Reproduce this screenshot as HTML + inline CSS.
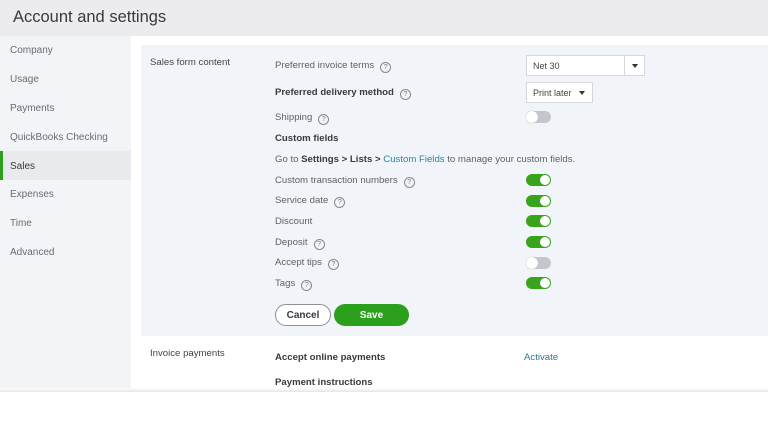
<!DOCTYPE html>
<html><head><style>
*{margin:0;padding:0;box-sizing:border-box}
body{width:768px;height:432px;background:#fff;font-family:"Liberation Sans",sans-serif;position:relative;overflow:hidden;color:#555}
.a{position:absolute;white-space:nowrap}
.hdr{left:0;top:0;width:768px;height:36px;background:#ececee}
.side{left:0;top:36px;width:131px;height:355px;background:#f3f4f7}
.nav{font-size:10px;color:#6b6c72;left:10px}
.panel{left:141px;top:45px;width:627px;height:291px;background:#f1f5fa}
.t{font-size:9.6px;color:#5f6066}
.b{font-weight:bold;color:#393a3d}
.q{display:inline-block;width:11px;height:11px;border:1px solid #888;border-radius:50%;font-size:7px;text-align:center;line-height:9px;margin-left:6px;vertical-align:-1px;color:#777;font-weight:normal}
.tg{width:25px;height:12px;border-radius:6px;left:526px}
.on{background:#3aa31d}
.on:after{content:"";position:absolute;right:1px;top:1px;width:10px;height:10px;border-radius:50%;background:#fff}
.off{background:#c4c6cb}
.off:after{content:"";position:absolute;left:0;top:0;width:12px;height:12px;border-radius:50%;background:#fff;box-shadow:0 0 1px #999}
.sel{background:#fff;border:1px solid #d5d7db;font-size:9px;color:#444;padding:5px 6px}
.tri{width:0;height:0;border-left:3px solid transparent;border-right:3px solid transparent;border-top:4px solid #333}
.btn{display:flex;align-items:center;justify-content:center;font-size:10px;font-weight:bold;border-radius:11px}
</style></head><body>
<div class="a hdr"></div>
<div class="a" style="left:13px;top:8px;font-size:16.5px;color:#393a3d">Account and settings</div>
<div class="a side"></div>
<div class="a" style="left:0;top:151px;width:131px;height:29px;background:#e9eaee"></div>
<div class="a" style="left:0;top:151px;width:3px;height:29px;background:#2ca01c"></div>
<div class="a nav" style="top:45px">Company</div>
<div class="a nav" style="top:74px">Usage</div>
<div class="a nav" style="top:103px">Payments</div>
<div class="a nav" style="top:132px">QuickBooks Checking</div>
<div class="a nav" style="top:161px;color:#393a3d">Sales</div>
<div class="a nav" style="top:189px">Expenses</div>
<div class="a nav" style="top:218px">Time</div>
<div class="a nav" style="top:247px">Advanced</div>
<div class="a panel"></div>
<div class="a t" style="left:150px;top:57px;color:#444">Sales form content</div>
<div class="a t" style="left:275px;top:60px">Preferred invoice terms<span class="q">?</span></div>
<div class="a t b" style="left:275px;top:87px">Preferred delivery method<span class="q">?</span></div>
<div class="a t" style="left:275px;top:112px">Shipping<span class="q">?</span></div>
<div class="a t b" style="left:275px;top:133px">Custom fields</div>
<div class="a t" style="left:275px;top:154px">Go to <b style="color:#393a3d">Settings &gt; Lists &gt;</b> <span style="color:#2a8499">Custom Fields</span> to manage your custom fields.</div>
<div class="a t" style="left:275px;top:175px">Custom transaction numbers<span class="q">?</span></div>
<div class="a t" style="left:275px;top:195px">Service date<span class="q">?</span></div>
<div class="a t" style="left:275px;top:216px">Discount</div>
<div class="a t" style="left:275px;top:237px">Deposit<span class="q">?</span></div>
<div class="a t" style="left:275px;top:257px">Accept tips<span class="q">?</span></div>
<div class="a t" style="left:275px;top:278px">Tags<span class="q">?</span></div>
<div class="a sel" style="left:526px;top:55px;width:119px;height:21px">Net 30</div>
<div class="a" style="left:624px;top:55px;width:1px;height:21px;background:#d5d7db"></div>
<div class="a tri" style="left:632px;top:64px"></div>
<div class="a sel" style="left:526px;top:82px;width:67px;height:21px">Print later</div>
<div class="a tri" style="left:579px;top:91px"></div>
<div class="a tg off" style="top:111px"></div>
<div class="a tg on" style="top:174px"></div>
<div class="a tg on" style="top:195px"></div>
<div class="a tg on" style="top:215px"></div>
<div class="a tg on" style="top:236px"></div>
<div class="a tg off" style="top:257px"></div>
<div class="a tg on" style="top:277px"></div>
<div class="a btn" style="left:275px;top:304px;width:56px;height:22px;border:1px solid #8d9096;background:#fff;color:#393a3d">Cancel</div>
<div class="a btn" style="left:334px;top:304px;width:75px;height:22px;background:#2ca01c;color:#fff">Save</div>
<div class="a t" style="left:150px;top:348px;color:#444">Invoice payments</div>
<div class="a t b" style="left:275px;top:352px">Accept online payments</div>
<div class="a t" style="left:524px;top:352px;color:#2a7a99">Activate</div>
<div class="a t b" style="left:275px;top:377px">Payment instructions</div>
<div class="a" style="left:0;top:388px;width:768px;height:4px;background:linear-gradient(#fff,#e4e5e8)"></div>
</body></html>
